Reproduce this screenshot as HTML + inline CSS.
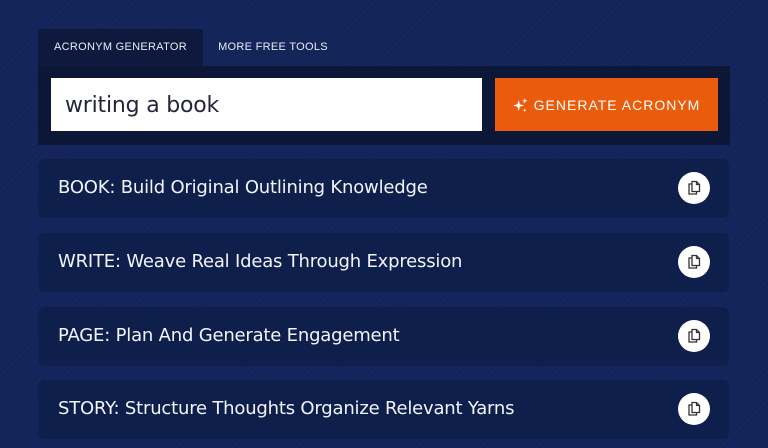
<!DOCTYPE html>
<html><head><meta charset="utf-8"><style>
*{margin:0;padding:0;box-sizing:border-box}
body{width:768px;height:448px;overflow:hidden;font-family:"Liberation Sans","DejaVu Sans",sans-serif;position:relative;
background-image:repeating-linear-gradient(135deg,rgba(255,255,255,0.01) 0 2px,transparent 2px 5px);background-color:#13245a}
.tab{position:absolute;top:29px;height:37px;color:#e8ecf5;font-size:11px;line-height:37px;letter-spacing:.3px;text-align:center}
.t1{left:38px;width:165px;background:#0d1a3e}
.t2{left:203px;width:140px;background:#142659}
.panel{position:absolute;left:38px;top:66px;width:692px;height:79px;background:#0c1737}
.input{position:absolute;left:51px;top:78px;width:431px;height:53px;background:#fff;color:#23263a;font-size:22px;line-height:56px;padding-left:14px;font-family:"DejaVu Sans","Liberation Sans",sans-serif;letter-spacing:-.2px}
.btn{position:absolute;left:495px;top:78px;width:223px;height:53px;background:#ea5b0c;color:#fff;font-size:14px;letter-spacing:1px;line-height:55px;text-align:center}
.btn svg{vertical-align:-3px;margin-right:6px}
.card{position:absolute;left:38px;width:691px;height:59px;background:#0f1f4c;border-radius:6px;color:#f2f4f8;font-size:18px;line-height:57px;padding-left:20px;font-family:"DejaVu Sans","Liberation Sans",sans-serif;letter-spacing:-.2px}
.copy{position:absolute;right:19px;top:13px;width:32px;height:32px;border-radius:50%;background:#fff}
.copy svg{position:absolute;left:9px;top:8px}
</style></head><body>
<div class="tab t1">ACRONYM GENERATOR</div>
<div class="tab t2">MORE FREE TOOLS</div>
<div class="panel"></div>
<div class="input">writing a book</div>
<div class="btn"><svg width="15" height="15" viewBox="0 0 16 16" fill="#fff"><path d="M6 2 L7.3 6.7 L12 8 L7.3 9.3 L6 14 L4.7 9.3 L0 8 L4.7 6.7Z"/><path d="M12.5 0 L13.2 2.3 L15.5 3 L13.2 3.7 L12.5 6 L11.8 3.7 L9.5 3 L11.8 2.3Z"/><path d="M12.5 11 L13 12.5 L14.5 13 L13 13.5 L12.5 15 L12 13.5 L10.5 13 L12 12.5Z"/></svg>GENERATE ACRONYM</div>
<div class="card" style="top:159px">BOOK: Build Original Outlining Knowledge<div class="copy"><svg width="14" height="16" viewBox="0 0 14 16" fill="none" stroke="#333" stroke-width="1.3"><path d="M5 1.5h4.5l3 3v7h-7.5z"/><path d="M9.5 1.5v3h3"/><path d="M5 4H2v10h7.5v-2.5"/></svg></div></div>
<div class="card" style="top:233px">WRITE: Weave Real Ideas Through Expression<div class="copy"><svg width="14" height="16" viewBox="0 0 14 16" fill="none" stroke="#333" stroke-width="1.3"><path d="M5 1.5h4.5l3 3v7h-7.5z"/><path d="M9.5 1.5v3h3"/><path d="M5 4H2v10h7.5v-2.5"/></svg></div></div>
<div class="card" style="top:307px">PAGE: Plan And Generate Engagement<div class="copy"><svg width="14" height="16" viewBox="0 0 14 16" fill="none" stroke="#333" stroke-width="1.3"><path d="M5 1.5h4.5l3 3v7h-7.5z"/><path d="M9.5 1.5v3h3"/><path d="M5 4H2v10h7.5v-2.5"/></svg></div></div>
<div class="card" style="top:380px">STORY: Structure Thoughts Organize Relevant Yarns<div class="copy"><svg width="14" height="16" viewBox="0 0 14 16" fill="none" stroke="#333" stroke-width="1.3"><path d="M5 1.5h4.5l3 3v7h-7.5z"/><path d="M9.5 1.5v3h3"/><path d="M5 4H2v10h7.5v-2.5"/></svg></div></div>
</body></html>
